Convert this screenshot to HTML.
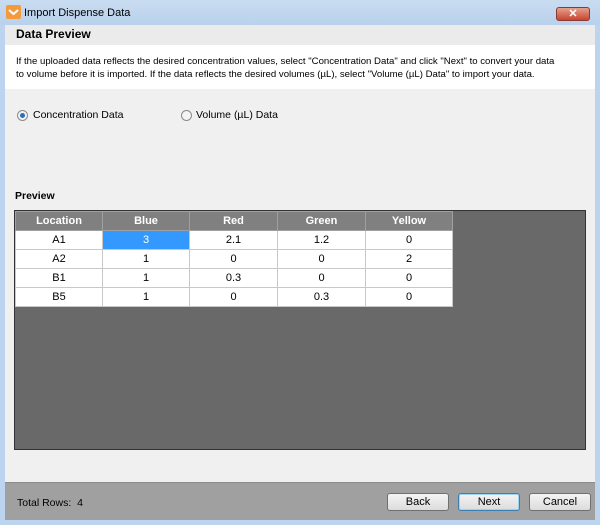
<!DOCTYPE html>
<html><head><style>
*{margin:0;padding:0;box-sizing:border-box}
body{width:600px;height:525px;background:#bcd4ee;font-family:"Liberation Sans",sans-serif;font-size:11px;position:relative;overflow:hidden;color:#000}
.abs{position:absolute}
.title{left:0;top:0;width:600px;height:25px;background:linear-gradient(#c9dcf1,#b9d1ec)}
.client{left:5px;top:25px;width:590px;height:495px;background:#f0f0f0}
table{border-collapse:collapse;position:absolute;left:15px;top:211px;font-size:11px}
td,th{height:19px;text-align:center;border:1px solid #c8c8c8;background:#fff}
th{background:#808080;color:#fff;border-color:#a0a0a0;font-weight:bold;height:19px}
.btn{height:18px;width:62px;border:1px solid #707070;border-radius:3px;background:linear-gradient(#f4f4f4,#dcdcdc);text-align:center;line-height:16px;top:493px}
.radio{width:11px;height:11px;border-radius:50%;border:1px solid #8a8a8a;background:#f4f4f4}
</style></head><body>
<div class="abs title"></div>
<div class="abs" style="left:6px;top:5px;width:15px;height:14px;background:#f49a3a;border-radius:2px"></div>
<svg class="abs" style="left:6px;top:5px" width="15" height="14"><path d="M3 5 L7.5 9 L12 5" stroke="#fff" stroke-width="2" fill="none"/></svg>
<div class="abs" style="left:24px;top:7px;font-size:11px">Import Dispense Data</div>
<div class="abs" style="left:556px;top:7px;width:34px;height:14px;border-radius:3px;background:linear-gradient(#e5a090,#c8452d);border:1px solid #8a3a30;color:#fff;font-weight:bold;text-align:center;line-height:12px;font-size:11px">✕</div>
<div class="abs client"></div>
<div class="abs" style="left:5px;top:25px;width:590px;height:20px;background:#ebebeb"></div>
<div class="abs" style="left:16px;top:27px;font-size:12px;font-weight:bold">Data Preview</div>
<div class="abs" style="left:5px;top:45px;width:590px;height:44px;background:#fff"></div>
<div class="abs" style="left:16px;top:55px;font-size:9.6px;line-height:13px;white-space:nowrap">If the uploaded data reflects the desired concentration values, select "Concentration Data" and click "Next" to convert your data<br>to volume before it is imported. If the data reflects the desired volumes (µL), select "Volume (µL) Data" to import your data.</div>
<div class="abs radio" style="left:17px;top:110px"></div>
<div class="abs" style="left:20px;top:113px;width:5px;height:5px;border-radius:50%;background:#2a6fb8"></div>
<div class="abs" style="left:33px;top:109px;font-size:10.5px">Concentration Data</div>
<div class="abs radio" style="left:181px;top:110px"></div>
<div class="abs" style="left:196px;top:109px;font-size:10.5px">Volume (µL) Data</div>
<div class="abs" style="left:15px;top:190px;font-weight:bold;font-size:10.5px">Preview</div>
<div class="abs" style="left:14px;top:210px;width:572px;height:240px;background:#696969;border:1px solid #333"></div>
<table>
<tr><th style="width:87px">Location</th><th style="width:87px">Blue</th><th style="width:88px">Red</th><th style="width:88px">Green</th><th style="width:87px">Yellow</th></tr>
<tr><td>A1</td><td style="background:#3399ff;color:#fff">3</td><td>2.1</td><td>1.2</td><td>0</td></tr>
<tr><td>A2</td><td>1</td><td>0</td><td>0</td><td>2</td></tr>
<tr><td>B1</td><td>1</td><td>0.3</td><td>0</td><td>0</td></tr>
<tr><td>B5</td><td>1</td><td>0</td><td>0.3</td><td>0</td></tr>
</table>
<div class="abs" style="left:5px;top:482px;width:590px;height:38px;background:#a0a0a0;border-top:1px solid #8c8c8c"></div>
<div class="abs" style="left:17px;top:497px;font-size:10.5px">Total Rows:&nbsp; 4</div>
<div class="abs btn" style="left:387px">Back</div>
<div class="abs btn" style="left:458px;border-color:#3c7fb1;box-shadow:inset 0 0 0 1px #9fd3f5">Next</div>
<div class="abs btn" style="left:529px">Cancel</div>
</body></html>
